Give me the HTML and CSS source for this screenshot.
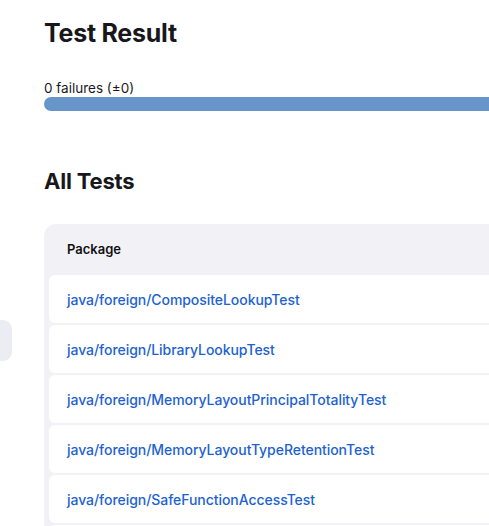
FILE: index.html
```html
<!DOCTYPE html>
<html>
<head>
<meta charset="utf-8">
<link rel="stylesheet" href="styles.css">
</head>
<body>
<div class="layout">
  <aside class="sidebar">
    <div class="side-item"></div>
  </aside>
  <main class="main">
    <h1 class="title">Test Result</h1>
    <div class="summary">
      <div class="summary-label">0 failures (±0)</div>
      <div class="bar"><div class="bar-fill"></div></div>
    </div>
    <h2 class="section-title">All Tests</h2>
    <div class="table">
      <div class="table-head">Package</div>
      <div class="row"><a class="link" href="#">java/foreign/CompositeLookupTest</a></div>
      <div class="row"><a class="link" href="#">java/foreign/LibraryLookupTest</a></div>
      <div class="row"><a class="link" href="#">java/foreign/MemoryLayoutPrincipalTotalityTest</a></div>
      <div class="row"><a class="link" href="#">java/foreign/MemoryLayoutTypeRetentionTest</a></div>
      <div class="row"><a class="link" href="#">java/foreign/SafeFunctionAccessTest</a></div>
      <div class="row"></div>
    </div>
  </main>
</div>
</body>
</html>
```
FILE: styles.css
```css
html, body {
  margin: 0;
  padding: 0;
  overflow: hidden;
  background: #ffffff;
}
body {
  font-family: Inter, "Noto Sans", sans-serif;
  color: #18181c;
  width: 489px;
  height: 526px;
}
.layout {
  display: flex;
  width: 700px;
}
.sidebar {
  width: 12px;
  flex: none;
}
.side-item {
  margin-top: 320px;
  height: 41px;
  background: #ececf3;
  border-radius: 0 9px 9px 0;
}
.main {
  flex: 1;
  padding: 0 0 0 32px;
}
.title {
  margin: 0;
  padding-top: 17px;
  font-size: 25px;
  line-height: 32px;
  font-weight: 700;
  letter-spacing: -0.25px;
}
.summary {
  margin-top: 30px;
}
.summary-label {
  font-size: 13.5px;
  line-height: 18px;
  color: #1b1b1f;
}
.bar {
  height: 14px;
  border-radius: 7px;
  background: #6795ca;
}
.section-title {
  margin: 0;
  padding-top: 55px;
  font-size: 22px;
  line-height: 30px;
  font-weight: 700;
  letter-spacing: -0.2px;
}
.table {
  margin-top: 28px;
  background: #f2f2f6;
  border-radius: 12px;
  padding: 0 5px 2px;
  display: flex;
  flex-direction: column;
  gap: 2px;
}
.table-head {
  height: 49px;
  display: flex;
  align-items: center;
  padding-left: 18px;
  font-size: 13px;
  font-weight: 600;
  color: #111114;
}
.row {
  height: 48px;
  background: #ffffff;
  border-radius: 6px;
  display: flex;
  align-items: center;
  padding-left: 18px;
}
.link {
  font-size: 14px;
  font-weight: 500;
  color: #1d62d0;
  text-decoration: none;
  letter-spacing: -0.05px;
}
```
